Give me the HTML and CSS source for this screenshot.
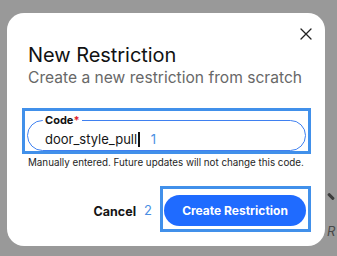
FILE: index.html
```html
<!DOCTYPE html>
<html lang="en">
<head>
<meta charset="utf-8">
<title>New Restriction</title>
<link rel="stylesheet" href="styles.css">
</head>
<body>
<div class="backdrop" aria-hidden="true">
  <span class="bg-mark"></span>
  <span class="bg-letter">R</span>
</div>
<div class="dialog" role="dialog" aria-labelledby="dlg-title">
  <div class="header">
    <div class="titles">
      <h2 class="title" id="dlg-title">New Restriction</h2>
      <p class="subtitle">Create a new restriction from scratch</p>
    </div>
    <button class="close" aria-label="Close">
      <svg width="12" height="12" viewBox="0 0 12 12"><path d="M1 1 L11 11 M11 1 L1 11" stroke="#222" stroke-width="1.3" fill="none" stroke-linecap="round"/></svg>
    </button>
  </div>
  <div class="field-focus">
    <fieldset class="pill">
      <legend class="legend">Code<span class="req">*</span></legend>
      <div class="value">door_style_pull<span class="caret"></span><span class="mark mark-1">1</span></div>
    </fieldset>
  </div>
  <p class="help">Manually entered. Future updates will not change this code.</p>
  <div class="actions">
    <button class="cancel">Cancel</button>
    <span class="mark mark-2">2</span>
    <div class="btn-focus">
      <button class="primary">Create Restriction</button>
    </div>
  </div>
</div>
</body>
</html>
```

FILE: styles.css
```css
* { box-sizing: border-box; }
html, body {
  margin: 0;
  padding: 0;
  width: 337px;
  height: 256px;
  overflow: hidden;
  background: #999999;
  font-family: Inter, "Liberation Sans", sans-serif;
}
body { position: relative; padding: 13px 0 0 7px; }

.backdrop { position: absolute; inset: 0; }
.bg-mark {
  position: absolute;
  left: 327px;
  top: 195px;
  width: 8px;
  height: 3px;
  background: #3d3d3d;
  transform: rotate(45deg);
  border-radius: 1px;
}
.bg-letter {
  position: absolute;
  left: 327px;
  top: 223px;
  font-size: 13px;
  font-style: italic;
  color: #4a4a4a;
  line-height: 16px;
}

.dialog {
  position: relative;
  width: 318px;
  height: 233px;
  background: #ffffff;
  border-radius: 17px;
  padding: 15px 14px 0 21px;
  display: flex;
  flex-direction: column;
}

.header {
  display: flex;
  justify-content: space-between;
  align-items: flex-start;
}
.titles { margin-top: 15px; flex: 1; min-width: 0; }
.title {
  margin: 0;
  font-size: 20px;
  line-height: 24px;
  font-weight: 400;
  color: #121212;
  letter-spacing: -0.05px;
}
.subtitle {
  margin: 2px 0 0;
  font-size: 15.6px;
  line-height: 18px;
  color: #686868;
  white-space: nowrap;
}
.close {
  border: 0;
  background: none;
  padding: 0;
  width: 12px;
  height: 12px;
  margin-right: -1px;
  display: flex;
  flex: none;
}

.field-focus {
  margin: 24px 3px 0 -3px;
  height: 40px;
  padding: 3px 2px 0;
  outline: 3px solid #4190ea;
}
.pill {
  margin: 0;
  border: 1px solid #3f80f0;
  border-radius: 18px;
  padding: 0 14px 3px 15px;
  min-width: 0;
}
.legend {
  padding: 0 2px;
  font-size: 11px;
  line-height: 13px;
  font-weight: 700;
  color: #111;
}
.req { color: #e0202a; }
.value {
  margin-top: 4px;
  padding-left: 2px;
  font-size: 13px;
  line-height: 16px;
  color: #151515;
  display: flex;
  align-items: center;
}
.caret {
  display: inline-block;
  width: 1.5px;
  height: 15px;
  background: #111;
  margin-left: 1px;
}
.mark {
  color: #4a8fe3;
  font-weight: 400;
}
.mark-1 { margin-left: 11px; font-size: 13px; }

.help {
  margin: 6px 0 0;
  font-size: 9.8px;
  line-height: 12px;
  color: #1e1e1e;
}

.actions {
  margin-top: 20px;
  margin-right: 3px;
  display: flex;
  justify-content: flex-end;
  align-items: center;
}
.cancel {
  border: 0;
  background: none;
  padding: 0;
  font-family: inherit;
  font-size: 12.5px;
  font-weight: 700;
  color: #151515;
  margin-top: 4px;
}
.mark-2 {
  font-size: 13px;
  margin-left: 8px;
  margin-right: 11px;
  margin-top: 2px;
}
.btn-focus {
  outline: 3px solid #4190ea;
  padding: 6px 2px 3px 1px;
}
.primary {
  display: block;
  width: 142px;
  height: 31px;
  border: 0;
  border-radius: 16px;
  background: #1f6bff;
  color: #ffffff;
  font-family: inherit;
  font-size: 12px;
  font-weight: 700;
  padding: 0;
}
```
